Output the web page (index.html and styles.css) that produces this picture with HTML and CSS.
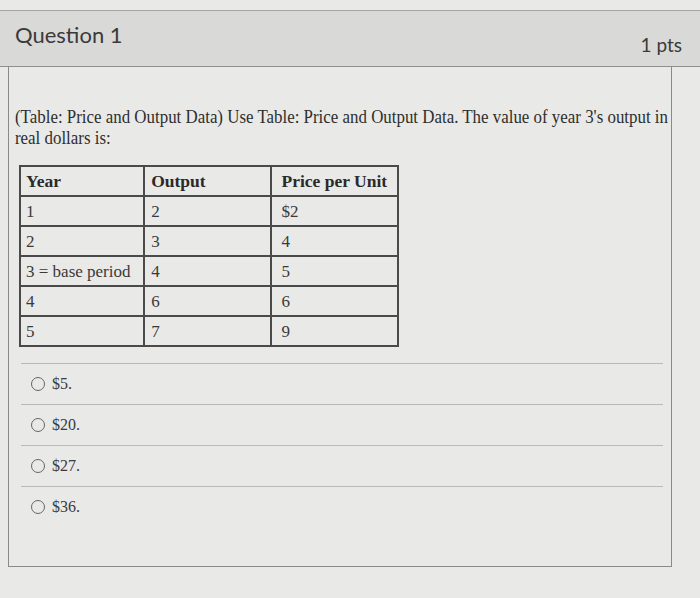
FILE: index.html
```html
<!DOCTYPE html>
<html>
<head>
<meta charset="utf-8">
<link rel="stylesheet" href="styles.css">
</head>
<body>
<div class="page">
  <div class="header">
    <div class="title">Question 1</div>
    <div class="pts">1 pts</div>
  </div>
  <div class="card">
    <p class="question">(Table: Price and Output Data) Use Table: Price and Output Data. The value of year 3's output in real dollars is:</p>
    <table class="data">
      <tr><th>Year</th><th>Output</th><th>Price per Unit</th></tr>
      <tr><td>1</td><td>2</td><td>$2</td></tr>
      <tr><td>2</td><td>3</td><td>4</td></tr>
      <tr><td>3 = base period</td><td>4</td><td>5</td></tr>
      <tr><td>4</td><td>6</td><td>6</td></tr>
      <tr><td>5</td><td>7</td><td>9</td></tr>
    </table>
    <div class="answers">
      <div class="answer"><span class="radio"></span><span>$5.</span></div>
      <div class="answer"><span class="radio"></span><span>$20.</span></div>
      <div class="answer"><span class="radio"></span><span>$27.</span></div>
      <div class="answer"><span class="radio"></span><span>$36.</span></div>
    </div>
  </div>
</div>
</body>
</html>
```
FILE: styles.css
```css
html, body {
  margin: 0;
  padding: 0;
  background: #ebebe9;
}
.page {
  width: 700px;
  height: 598px;
  padding-top: 10px;
  box-sizing: border-box;
  background: #e9e9e7;
}
.header {
  height: 55px;
  background: #d9d9d7;
  border-top: 1px solid #a5a5a3;
  border-bottom: 1px solid #8f8f8d;
  display: flex;
  justify-content: space-between;
  padding: 0 18px 0 15px;
  font-family: Lato, "Open Sans", sans-serif;
  color: #3a3a3a;
}
.title {
  font-size: 22px;
  padding-top: 10px;
}
.pts {
  font-size: 19px;
  padding-top: 22px;
}
.card {
  margin: 0 28px 0 8px;
  height: 500px;
  box-sizing: border-box;
  border-left: 1px solid #8a8a88;
  border-right: 1px solid #8a8a88;
  border-bottom: 1px solid #8a8a88;
  padding: 40px 0 0 6px;
  font-family: "Liberation Serif", "Times New Roman", serif;
  color: #2e2e2e;
}
.question {
  margin: 0;
  width: 730px;
  font-size: 18.5px;
  line-height: 21px;
  transform: scaleX(0.913);
  transform-origin: left;
}
.data {
  margin: 16px 0 0 4px;
  border-collapse: collapse;
  font-size: 17px;
  width: 380px;
}
.data th, .data td {
  border: 2px solid #4a4a4a;
  text-align: left;
  padding: 2px 6px 0;
  height: 26px;
  color: #3a3a3a;
}
.data th {
  font-size: 17.5px;
  height: 28px;
  padding-top: 0;
  color: #2a2a2a;
}
.data th:nth-child(1), .data td:nth-child(1) { width: 127px; padding-left: 5px; }
.data th:nth-child(2), .data td:nth-child(2) { width: 127px; }
.data th:nth-child(3), .data td:nth-child(3) { width: 126px; padding-left: 9px; }
.answers {
  margin: 16px 8px 0 6px;
}
.answer {
  border-top: 1px solid #b9b9b7;
  height: 40px;
  display: flex;
  align-items: center;
  gap: 7px;
  padding-left: 10px;
  font-size: 16px;
  color: #3a3a3a;
}
.radio {
  width: 12px;
  height: 12px;
  border: 1.5px solid #666;
  border-radius: 50%;
  display: inline-block;
}
```
